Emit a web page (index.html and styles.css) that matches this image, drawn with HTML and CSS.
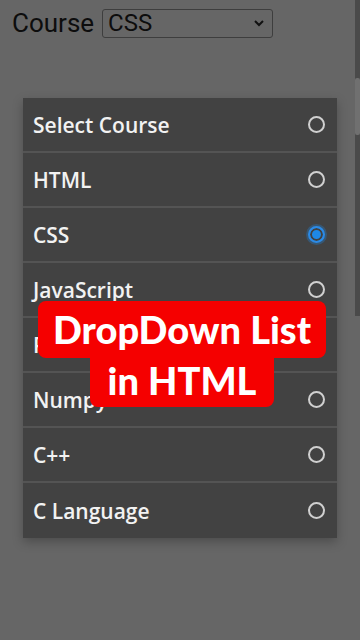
FILE: index.html
```html
<!DOCTYPE html>
<html lang="en">
<head>
    <meta charset="UTF-8">
    <meta name="viewport" content="width=device-width, initial-scale=1.0">
    <title>DropDown List in HTML</title>
    <link rel="stylesheet" href="styles.css">
</head>
<body>

    <div class="page">
        <div class="form-row">
            <label class="label" for="course">Course</label>
            <div class="select" id="course">
                <span>CSS</span>
                <svg class="chevron" width="12" height="8" viewBox="0 0 12 8">
                    <path d="M2 2 L6 6 L10 2" fill="none" stroke="#111" stroke-width="2"/>
                </svg>
            </div>
        </div>

        <div class="picker">
            <div class="option"><span>Select Course</span><span class="radio"></span></div>
            <div class="option"><span>HTML</span><span class="radio"></span></div>
            <div class="option"><span>CSS</span><span class="radio checked"></span></div>
            <div class="option"><span>JavaScript</span><span class="radio"></span></div>
            <div class="option"><span>Python</span><span class="radio"></span></div>
            <div class="option"><span>Numpy</span><span class="radio"></span></div>
            <div class="option"><span>C++</span><span class="radio"></span></div>
            <div class="option last"><span>C Language</span><span class="radio"></span></div>

            <div class="banner">
                <span class="banner-line top">DropDown List</span>
                <span class="banner-line bottom">in HTML</span>
            </div>
        </div>
    </div>

    <div class="scrollbar"><div class="thumb"></div></div>

</body>
</html>
```

FILE: styles.css
```css
/* Page dimmed behind the native picker */
body {
    margin: 0;
    padding: 0;
    background-color: #666;
    font-family: Roboto, Arial, sans-serif;
    height: 640px;
    overflow: hidden;
}

.page {
    display: flex;
    flex-direction: column;
}

.form-row {
    display: flex;
    align-items: center;
    gap: 8px;
    padding: 8px 0 0 12px;
}

.label {
    font-size: 26px;
    color: #0d0d0d;
}

.select {
    height: 27px;
    width: 158px;
    border: 1px solid #3e3e3e;
    border-radius: 3px;
    display: flex;
    align-items: center;
    justify-content: space-between;
    padding: 0 6px 0 5px;
    font-size: 24px;
    color: #0d0d0d;
}

.chevron {
    margin-right: 1px;
}

/* The picker dialog */
.picker {
    position: relative;
    margin: 60px 0 0 23px;
    width: 314px;
    background-color: #424242;
    box-shadow: 0 4px 10px rgba(0, 0, 0, 0.25);
    font-family: "Open Sans", Lato, sans-serif;
}

.option {
    height: 53px;
    border-bottom: 2px solid #545454;
    display: flex;
    align-items: center;
    justify-content: space-between;
    padding: 0 12px 0 10px;
    font-size: 21px;
    font-weight: 600;
    color: #f2f2f2;
}

.option.last {
    border-bottom: none;
    height: 55px;
}

.radio {
    width: 13px;
    height: 13px;
    border: 2px solid #d0d0d0;
    border-radius: 50%;
}

.radio.checked {
    border-color: #2b8ae6;
    background-color: #1e88e5;
    box-shadow: inset 0 0 0 2px #424242, 0 0 0 2px rgba(30, 136, 229, 0.3);
}

/* Red caption over the list */
.banner {
    position: absolute;
    left: 15px;
    top: 203px;
    width: 288px;
    display: flex;
    flex-direction: column;
    align-items: center;
}

.banner-line {
    background-color: #f50000;
    color: #fff;
    font-family: Lato, sans-serif;
    font-weight: 900;
    font-size: 38px;
    border-radius: 8px;
    text-align: center;
}

.banner-line.top {
    width: 288px;
    height: 57px;
    line-height: 57px;
}

.banner-line.bottom {
    width: 184px;
    height: 50px;
    line-height: 46px;
    margin-top: -1px;
    border-radius: 0 0 8px 8px;
}

.scrollbar {
    position: absolute;
    top: 0;
    right: 0;
    width: 5px;
    height: 316px;
    background-color: #4a4a4a;
}

.thumb {
    margin-top: 78px;
    height: 57px;
    background-color: #707070;
    border-radius: 2px;
}
```
